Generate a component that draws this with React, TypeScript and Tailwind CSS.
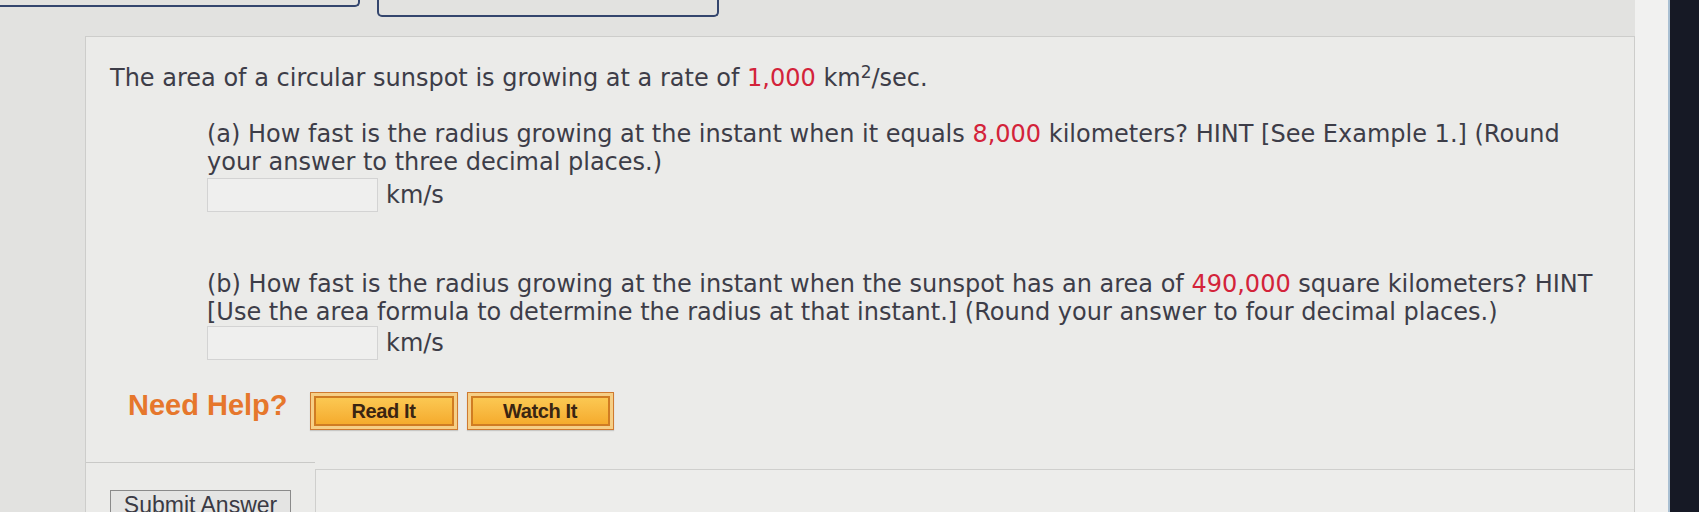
import React from "react";

const Red = ({ children }: { children: React.ReactNode }) => (
  <span className="text-[#d3233a]">{children}</span>
);

const HelpButton = ({ label, w }: { label: string; w: string }) => (
  <div className={`${w} h-[38px] border border-[#cf7a30] bg-[#f6cf86] p-[3px] shadow-[0_1px_1px_rgba(0,0,0,0.15)]`}>
    <div className="h-full w-full border-2 border-[#d07c22] bg-gradient-to-b from-[#fbc852] to-[#f5ab2c] flex items-center justify-center">
      <span className="font-['Liberation_Sans',Arial,sans-serif] font-bold text-[20px] leading-[22px] text-[#3a2512] tracking-[-0.4px]">
        {label}
      </span>
    </div>
  </div>
);

const AnswerBox = () => (
  <div className="flex items-center gap-[8px]">
    <div className="w-[171px] h-[34px] border border-[#d3d3d3] bg-[#efefee]" />
    <span>km/s</span>
  </div>
);

export default function App() {
  return (
    <div className="w-[1699px] h-[512px] overflow-hidden bg-[#e2e2e0] flex font-['DejaVu_Sans',Verdana,sans-serif] text-[24px] leading-[28px] text-[#3d3d48]">
      <div className="flex-1 flex flex-col">
        {/* top tabs */}
        <div className="h-[36px] flex items-start gap-[17px] shrink-0">
          <div className="w-[360px] h-[7px] border-b-2 border-r-2 border-[#34466e] rounded-br-[5px]" />
          <div className="w-[342px] h-[17px] border-b-2 border-x-2 border-[#34466e] rounded-b-[5px]" />
        </div>
        {/* panel */}
        <div className="ml-[85px] flex-1 border-l border-t border-r border-[#cdcdcb] bg-[#ebebe9] flex flex-col">
          <div className="pl-[24px] pt-[27px]">
            <p className="whitespace-nowrap">
              The area of a circular sunspot is growing at a rate of <Red>1,000</Red> km
              <sup className="text-[17px]">2</sup>/sec.
            </p>
            <div className="ml-[97px] mt-[28px]">
              <p className="whitespace-nowrap">
                (a) How fast is the radius growing at the instant when it equals <Red>8,000</Red> kilometers? HINT [See Example 1.] (Round
                <br />
                your answer to three decimal places.)
              </p>
              <div className="mt-[2px]">
                <AnswerBox />
              </div>
              <p className="whitespace-nowrap mt-[58px]">
                (b) How fast is the radius growing at the instant when the sunspot has an area of <Red>490,000</Red> square kilometers? HINT
                <br />
                [Use the area formula to determine the radius at that instant.] (Round your answer to four decimal places.)
              </p>
              <AnswerBox />
            </div>
            <div className="ml-[18px] mt-[32px] flex items-start gap-[22px]">
              <span className="font-['Liberation_Sans',Arial,sans-serif] font-bold text-[29px] leading-[26px] text-[#e6772c]">
                Need Help?
              </span>
              <div className="flex gap-[9px]">
                <HelpButton label="Read It" w="w-[148px]" />
                <HelpButton label="Watch It" w="w-[147px]" />
              </div>
            </div>
          </div>
          {/* bottom */}
          <div className="mt-[32px] flex flex-1">
            <div className="w-[229px] border-t border-[#c9c9c7] pl-[24px] pt-[27px]">
              <div className="w-[181px] h-[34px] border border-[#8a8a8a] bg-[#e4e4e3] flex items-start justify-center pt-[1px]">
                <span className="font-['Liberation_Sans',Arial,sans-serif] text-[23px] leading-[26px] text-[#3a3a44]">
                  Submit Answer
                </span>
              </div>
            </div>
            <div className="flex-1 mt-[7px] border-l border-t border-[#cfcfcd] bg-[#ededeb]" />
          </div>
        </div>
      </div>
      {/* right edge */}
      <div className="w-[33px] bg-[#f1f1f0]" />
      <div className="w-[2px] bg-[#a9bfd2]" />
      <div className="w-[29px] bg-[#161925]" />
    </div>
  );
}
